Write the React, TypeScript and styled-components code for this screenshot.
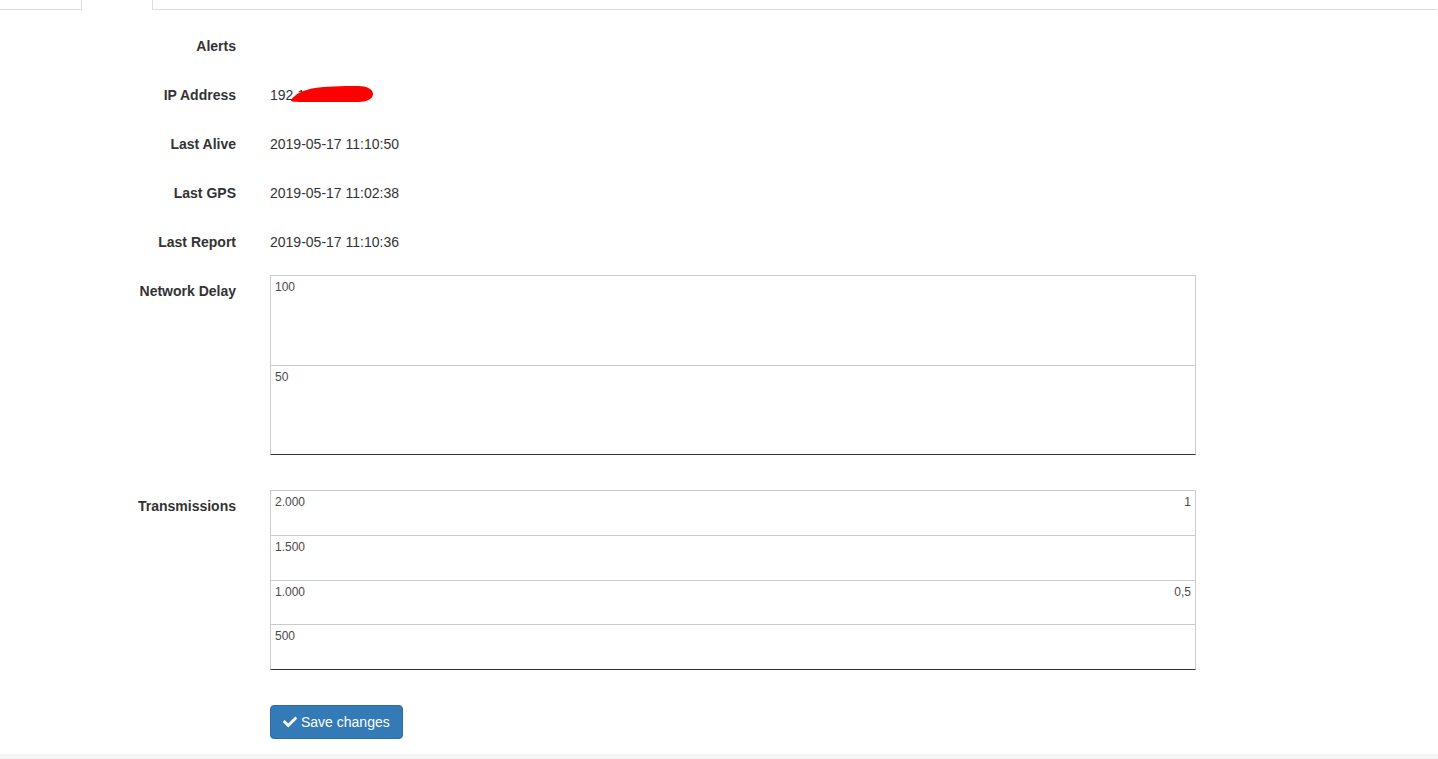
import React from "react";
import styled, { createGlobalStyle } from "styled-components";
import { FaCheck } from "react-icons/fa";

const GlobalStyle = createGlobalStyle`
  html, body {
    margin: 0;
    padding: 0;
    background: #fff;
  }
  body {
    font-family: "Liberation Sans", Arial, Helvetica, sans-serif;
    font-size: 14px;
    line-height: 20px;
    color: #333;
  }
`;

const Page = styled.div`
  display: flex;
  flex-direction: column;
  min-height: 759px;
`;

const TabBar = styled.ul`
  display: flex;
  margin: 0 1px 0 0;
  padding: 0;
  list-style: none;
  height: 9px;
  border-bottom: 1px solid #ddd;
`;

const Tab = styled.li<{ $active?: boolean; $width: number }>`
  width: ${(p) => p.$width}px;
  height: ${(p) => (p.$active ? 10 : 9)}px;
  border-right: 1px solid #ddd;
  background: #fff;
  position: relative;
  z-index: ${(p) => (p.$active ? 1 : 0)};
`;

const Form = styled.div`
  padding-top: 19px;
  flex: 1;
`;

const Row = styled.div<{ $gapAfter?: number }>`
  display: grid;
  grid-template-columns: 236px 926px;
  column-gap: 34px;
  margin-bottom: ${(p) => p.$gapAfter ?? 15}px;
`;

const Label = styled.div`
  text-align: right;
  font-weight: bold;
  padding-top: 7px;
  line-height: 20px;
`;

const Value = styled.div`
  padding-top: 7px;
  min-height: 27px;
  line-height: 20px;
`;

const Masked = styled.span`
  position: relative;
  display: inline-block;
`;

// red scribble hiding the rest of the address
const Redaction = styled.svg`
  position: absolute;
  left: 21px;
  top: 1px;
  display: block;
`;

const Chart = styled.div`
  margin-top: 1px;
  box-sizing: border-box;
  height: 180px;
  border: 1px solid #ccc;
  border-bottom: 1px solid #333;
  display: flex;
  flex-direction: column;
`;

const Band = styled.div`
  flex: 1 1 0;
  display: flex;
  justify-content: space-between;
  align-items: flex-start;
  padding: 4px 4px 0 4px;
  & + & {
    border-top: 1px solid #ccc;
  }
`;

const Tick = styled.span`
  font-size: 12px;
  line-height: 14px;
  color: #4a4a4a;
`;

const SaveButton = styled.button`
  margin-top: 1px;
  display: inline-flex;
  align-items: center;
  gap: 4px;
  height: 34px;
  box-sizing: border-box;
  padding: 6px 12px;
  font-family: inherit;
  font-size: 14px;
  line-height: 20px;
  color: #fff;
  background: #337ab7;
  border: 1px solid #2e6da4;
  border-radius: 4px;
  cursor: pointer;
  justify-self: start;
`;

const Footer = styled.div`
  height: 6px;
  background: #f5f5f5;
`;

type BandData = { left: string; right?: string };

const delayBands: BandData[] = [{ left: "100" }, { left: "50" }];

const transmissionBands: BandData[] = [
  { left: "2.000", right: "1" },
  { left: "1.500" },
  { left: "1.000", right: "0,5" },
  { left: "500" },
];

const infoRows = [
  { label: "Last Alive", value: "2019-05-17 11:10:50" },
  { label: "Last GPS", value: "2019-05-17 11:02:38" },
  { label: "Last Report", value: "2019-05-17 11:10:36" },
];

const ChartBox = ({ bands }: { bands: BandData[] }) => (
  <Chart>
    {bands.map((b) => (
      <Band key={b.left}>
        <Tick>{b.left}</Tick>
        {b.right ? <Tick>{b.right}</Tick> : null}
      </Band>
    ))}
  </Chart>
);

export default function App() {
  return (
    <Page>
      <GlobalStyle />
      <TabBar>
        <Tab $width={81} />
        <Tab $width={70} $active />
      </TabBar>
      <Form>
        <Row>
          <Label>Alerts</Label>
          <Value />
        </Row>
        <Row>
          <Label>IP Address</Label>
          <Value>
            <Masked>
              192.1
              <Redaction width="82" height="16" viewBox="0 0 82 16">
                <path
                  d="M0 14 C 4 8, 12 4, 24 2 C 34 0.5, 50 0, 67 0 C 76 0, 82 3.5, 82 8 C 82 12.5, 76 16, 67 16 L 8 16 C 3 16, -1 15.5, 0 14 Z"
                  fill="#ff0000"
                />
              </Redaction>
            </Masked>
          </Value>
        </Row>
        {infoRows.map((r) => (
          <Row key={r.label}>
            <Label>{r.label}</Label>
            <Value>{r.value}</Value>
          </Row>
        ))}
        <Row $gapAfter={34}>
          <Label>Network Delay</Label>
          <ChartBox bands={delayBands} />
        </Row>
        <Row $gapAfter={34}>
          <Label>Transmissions</Label>
          <ChartBox bands={transmissionBands} />
        </Row>
        <Row>
          <div />
          <SaveButton type="button">
            <FaCheck size={14} />
            Save changes
          </SaveButton>
        </Row>
      </Form>
      <Footer />
    </Page>
  );
}
